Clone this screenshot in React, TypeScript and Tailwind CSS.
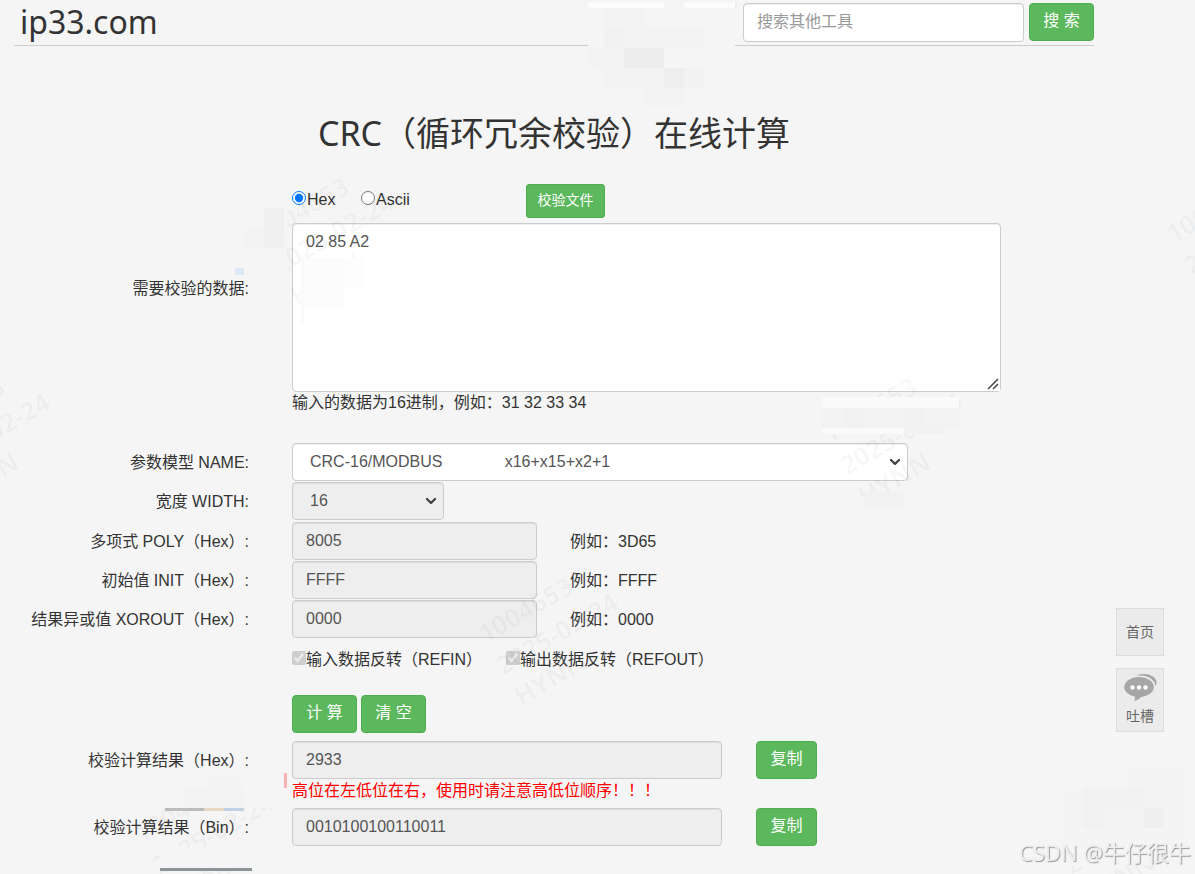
import { useState } from "react";
import type { ReactNode } from "react";
import { ChevronDown } from "lucide-react";

const BTN =
  "h-[38px] rounded border border-[#4cae4c] bg-[#5cb85c] pb-0.5 text-base text-white hover:bg-[#449d44] cursor-pointer";

const FIELD =
  "h-[38px] rounded border border-[#ccc] text-base text-[#555] shadow-[inset_0_1px_1px_rgba(0,0,0,0.075)]";

const MODEL = "CRC-16/MODBUS" + "\u00a0".repeat(14) + "x16+x15+x2+1";

const PARAMS = [
  { id: "poly", label: "多项式 POLY（Hex）:", value: "8005", hint: "例如：3D65" },
  { id: "init", label: "初始值 INIT（Hex）:", value: "FFFF", hint: "例如：FFFF" },
  { id: "xorout", label: "结果异或值 XOROUT（Hex）:", value: "0000", hint: "例如：0000" },
];

// Start point of every repeated watermark block
const MARKS = [
  { x: 591, y: 20 },
  { x: 247, y: 220 },
  { x: 1159, y: 220 },
  { x: -97, y: 420 },
  { x: 815, y: 420 },
  { x: 471, y: 620 },
  { x: 127, y: 820 },
  { x: 1039, y: 820 },
];

// Mosaic blocks painted over the page: x, y, width, height, colour
const BLOCKS: [number, number, number, number, string][] = [
  [588, 0, 147, 107, "#f5f5f5"],
  [588, 2, 76, 6, "#fbfbfb"],
  [684, 2, 51, 6, "#fbfbfb"],
  [604, 8, 40, 20, "#f3f3f3"],
  [604, 28, 20, 20, "#f1f1f1"],
  [624, 28, 80, 20, "#f3f3f3"],
  [588, 48, 36, 20, "#f3f3f3"],
  [624, 48, 40, 20, "#ededed"],
  [604, 68, 60, 20, "#f3f3f3"],
  [664, 68, 20, 20, "#eeeeee"],
  [684, 68, 20, 20, "#f2f2f2"],
  [644, 88, 40, 19, "#f3f3f3"],
  [244, 208, 43, 67, "#f5f5f5"],
  [264, 208, 20, 40, "#f0f0f0"],
  [244, 228, 20, 20, "#f3f3f3"],
  [235, 268, 9, 7, "#dbe8f7"],
  [301, 258, 3, 66, "#fafafa"],
  [304, 258, 40, 50, "#fcfcfc"],
  [344, 258, 20, 30, "#fdfdfd"],
  [822, 397, 137, 11, "#fafafa"],
  [822, 408, 137, 20, "#f3f3f3"],
  [844, 408, 20, 20, "#f1f1f1"],
  [904, 408, 20, 20, "#f1f1f1"],
  [822, 428, 82, 6, "#fafafa"],
  [904, 428, 40, 6, "#f2f2f2"],
  [864, 492, 40, 16, "#f1f1f1"],
  [165, 783, 119, 25, "#f5f5f5"],
  [204, 773, 40, 15, "#f4f4f4"],
  [184, 788, 60, 20, "#f3f3f3"],
  [165, 808, 39, 3, "#bbbbbb"],
  [204, 808, 20, 3, "#e6d7c3"],
  [224, 808, 20, 3, "#c3cfe2"],
  [284, 773, 3, 15, "#f4b2b2"],
  [160, 848, 92, 20, "#f5f5f5"],
  [160, 868, 92, 3, "#8b9496"],
  [1039, 768, 149, 97, "#f5f5f5"],
  [1124, 768, 64, 20, "#f4f4f4"],
  [1064, 788, 124, 60, "#f4f4f4"],
  [1084, 788, 60, 20, "#f1f1f1"],
  [1084, 808, 20, 20, "#f1f1f1"],
  [1124, 808, 20, 20, "#f3f3f3"],
  [1144, 808, 20, 20, "#efefef"],
];

function Row({ label, htmlFor, children }: { label?: string; htmlFor?: string; children: ReactNode }) {
  return (
    <div className="grid grid-cols-[236px_1fr] items-center gap-x-[42px]">
      {label ? (
        <label htmlFor={htmlFor} className="pt-0.5 pr-px text-right whitespace-nowrap">
          {label}
        </label>
      ) : (
        <span />
      )}
      <div>{children}</div>
    </div>
  );
}

function Watermark() {
  return (
    <div aria-hidden="true" className="pointer-events-none absolute inset-0 overflow-hidden">
      {MARKS.map((m) => (
        <div
          key={`${m.x}-${m.y}`}
          className="absolute origin-top-left -rotate-30 font-['Open_Sans',sans-serif] text-[26px] leading-[36px] font-bold whitespace-pre text-black/[0.03]"
          style={{ left: m.x, top: m.y }}
        >
          {"1004653\n2025-02-24\nHYNN"}
        </div>
      ))}
      {BLOCKS.map(([x, y, w, h, color], i) => (
        <div
          key={i}
          className="absolute"
          style={{ left: x, top: y, width: w, height: h, backgroundColor: color }}
        />
      ))}
    </div>
  );
}

function Arrow() {
  return (
    <ChevronDown
      size={16}
      strokeWidth={3.5}
      className="pointer-events-none absolute top-[11px] right-[5px] text-[#444]"
    />
  );
}

function ChatIcon() {
  return (
    <svg width="34" height="29" viewBox="0 0 34 29" aria-hidden="true">
      <ellipse cx="21" cy="9.500" rx="12.500" ry="8.500" fill="#a6a6a6" />
      <path d="M29 14l2.500 5.500-7-2z" fill="#a6a6a6" />
      <ellipse cx="17" cy="13.500" rx="15.500" ry="11" fill="#ebebeb" />
      <ellipse cx="16" cy="14" rx="14.800" ry="10" fill="#a6a6a6" />
      <path d="M11 22q2 3 0 6 5-1 8-5z" fill="#a6a6a6" />
      <circle cx="9.500" cy="14.500" r="2.200" fill="#fff" />
      <circle cx="16" cy="14.500" r="2.200" fill="#fff" />
      <circle cx="22.500" cy="14.500" r="2.200" fill="#fff" />
    </svg>
  );
}

export default function App() {
  const [mode, setMode] = useState("hex");
  const [data, setData] = useState("02 85 A2");

  return (
    <div className="relative min-h-screen overflow-hidden bg-[#f5f5f5] font-['Liberation_Sans','Noto_Sans_CJK_SC',sans-serif] text-base leading-[22px] text-[#333]">
      <div className="ml-[14px] max-w-[1080px]">
        <header className="flex h-[46px] items-start justify-between border-b border-[#ccc]">
          <a href="#" className="pl-1.5 font-['Noto_Sans',sans-serif] text-[32px] leading-[44px]">
            ip33.com
          </a>
          <form className="flex gap-[5px] pt-[3px]" onSubmit={(e) => e.preventDefault()}>
            <input
              type="text"
              aria-label="搜索其他工具"
              placeholder="搜索其他工具"
              className="h-[39px] w-[281px] rounded border border-[#ccc] bg-white px-[13px] pb-0.5 text-base shadow-[inset_0_1px_1px_rgba(0,0,0,0.075)] placeholder:text-[#999]"
            />
            <button type="submit" className={`${BTN} w-[65px]`}>
              搜 索
            </button>
          </form>
        </header>

        <h1 className="pt-[62px] text-center font-['Noto_Sans','Noto_Sans_CJK_SC',sans-serif] text-[34px] leading-[50px]">
          CRC（循环冗余校验）在线计算
        </h1>

        <form className="pt-[26px] pb-[26px]" onSubmit={(e) => e.preventDefault()}>
          <Row label="需要校验的数据:" htmlFor="data">
            <div className="flex h-[34px] items-center">
              <label className="flex w-[69px] items-center pb-0.5">
                <input
                  type="radio"
                  name="mode"
                  className="mr-px mb-1 size-[14px]"
                  checked={mode === "hex"}
                  onChange={() => setMode("hex")}
                />
                Hex
              </label>
              <label className="flex w-[165px] items-center pb-0.5">
                <input
                  type="radio"
                  name="mode"
                  className="mr-px mb-1 size-[14px]"
                  checked={mode === "ascii"}
                  onChange={() => setMode("ascii")}
                />
                Ascii
              </label>
              <button
                type="button"
                className="h-[34px] w-[79px] cursor-pointer rounded-[3px] border border-[#4cae4c] bg-[#5cb85c] pb-0.5 text-sm text-white hover:bg-[#449d44]"
              >
                校验文件
              </button>
            </div>
            <div className="relative mt-[5px] w-[709px]">
              <textarea
                id="data"
                value={data}
                onChange={(e) => setData(e.target.value)}
                className="block h-[169px] w-full rounded border border-[#ccc] bg-white px-[13px] py-[7px] text-base leading-[22px] text-[#555] shadow-[inset_0_1px_1px_rgba(0,0,0,0.075)]"
              />
              {/* Resize grip */}
              <svg
                width="14"
                height="14"
                viewBox="0 0 14 14"
                className="pointer-events-none absolute right-px bottom-px bg-white"
              >
                <path d="M2 12L12 2M7 12L12 7" stroke="#444" strokeWidth="1.500" fill="none" />
              </svg>
            </div>
          </Row>
          <Row>
            <p>输入的数据为16进制，例如：31 32 33 34</p>
          </Row>

          <div className="mt-[29px] space-y-px">
            <Row label="参数模型 NAME:" htmlFor="model">
              <div className="relative w-[616px]">
                <select id="model" className={`${FIELD} block w-full appearance-none bg-white px-[17px]`}>
                  <option>{MODEL}</option>
                </select>
                <Arrow />
              </div>
            </Row>
            <Row label="宽度 WIDTH:" htmlFor="width">
              <div className="relative w-[152px]">
                <select
                  id="width"
                  disabled
                  className={`${FIELD} block w-full appearance-none bg-[#eee] px-[17px] opacity-100`}
                >
                  <option>16</option>
                </select>
                <Arrow />
              </div>
            </Row>
          </div>

          <div className="mt-0.5 space-y-px">
            {PARAMS.map((p) => (
              <Row key={p.id} label={p.label} htmlFor={p.id}>
                <div className="flex items-center gap-[33px]">
                  <input
                    id={p.id}
                    type="text"
                    readOnly
                    value={p.value}
                    className={`${FIELD} w-[245px] bg-[#eee] px-[13px]`}
                  />
                  <span className="pt-0.5">{p.hint}</span>
                </div>
              </Row>
            ))}
          </div>

          <Row>
            <div className="flex h-[43px] items-center">
              <label className="flex w-[214px] items-center">
                <input type="checkbox" className="mb-1 size-[14px]" checked disabled readOnly />
                输入数据反转（REFIN）
              </label>
              <label className="flex items-center">
                <input type="checkbox" className="mb-1 size-[14px]" checked disabled readOnly />
                输出数据反转（REFOUT）
              </label>
            </div>
          </Row>

          <div className="mt-[14px]">
            <Row>
              <div className="flex gap-1">
                <button type="submit" className={`${BTN} w-[65px]`}>
                  计 算
                </button>
                <button type="reset" className={`${BTN} w-[65px]`} onClick={() => setData("")}>
                  清 空
                </button>
              </div>
            </Row>
          </div>

          <div className="mt-2">
            <Row label="校验计算结果（Hex）:" htmlFor="hex">
              <div className="flex gap-[34px]">
                <input
                  id="hex"
                  type="text"
                  readOnly
                  value="2933"
                  className={`${FIELD} w-[430px] bg-[#eee] px-[13px]`}
                />
                <button type="button" className={`${BTN} w-[61px]`}>
                  复制
                </button>
              </div>
            </Row>
            <Row>
              <p className="pt-px text-[#f00]">高位在左低位在右，使用时请注意高低位顺序！！！</p>
            </Row>
          </div>

          <div className="mt-1.5">
            <Row label="校验计算结果（Bin）:" htmlFor="bin">
              <div className="flex gap-[34px]">
                <input
                  id="bin"
                  type="text"
                  readOnly
                  value="0010100100110011"
                  className={`${FIELD} w-[430px] bg-[#eee] px-[13px]`}
                />
                <button type="button" className={`${BTN} w-[61px]`}>
                  复制
                </button>
              </div>
            </Row>
          </div>
        </form>
      </div>

      <Watermark />

      {/* Floating side buttons */}
      <nav className="fixed right-[31px] bottom-[142px] flex w-12 flex-col gap-3 text-sm leading-5 text-[#666]">
        <a href="#" className="flex h-12 items-center justify-center border border-[#ddd] bg-[#ebebeb]">
          首页
        </a>
        <a href="#" className="flex h-16 flex-col items-center border border-[#ddd] bg-[#ebebeb] pt-1">
          <ChatIcon />
          <span className="pt-1">吐槽</span>
        </a>
      </nav>

      <div className="pointer-events-none fixed right-1 bottom-1.5 font-['Noto_Sans','Noto_Sans_CJK_SC',sans-serif] text-[22px] leading-8 whitespace-nowrap text-[#eee] [text-shadow:1px_1px_1px_#999]">
        CSDN @牛仔很牛
      </div>
    </div>
  );
}
